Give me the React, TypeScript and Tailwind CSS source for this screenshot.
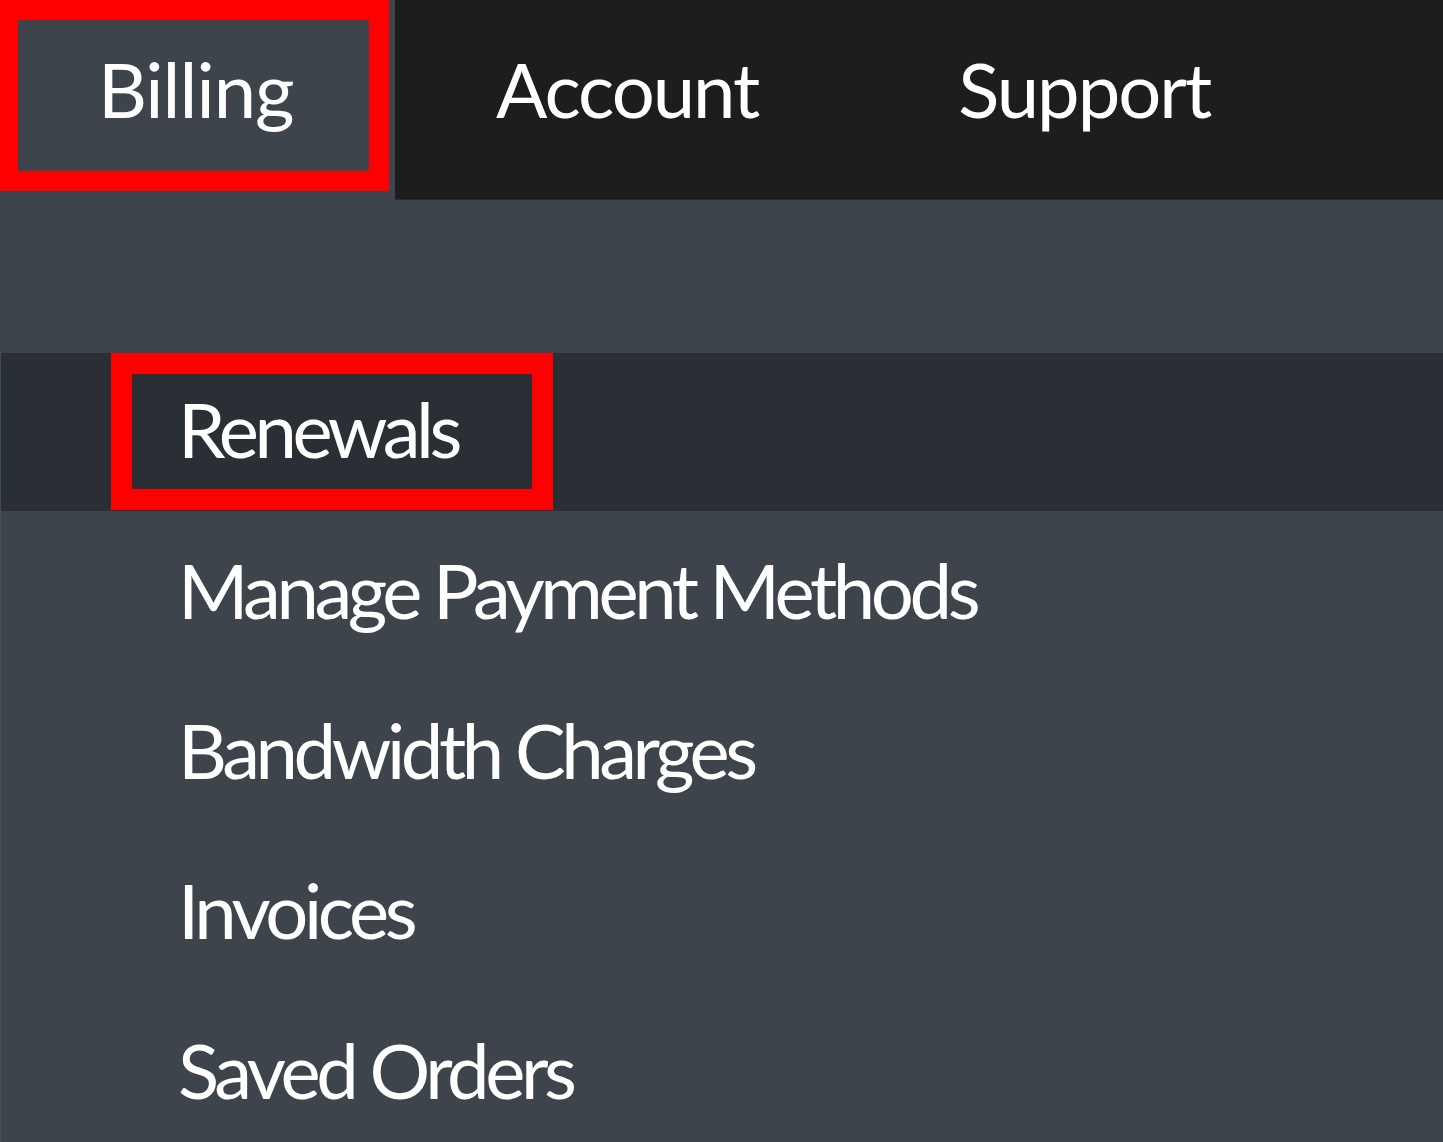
import React from "react";

const items = ["Renewals", "Manage Payment Methods", "Bandwidth Charges", "Invoices", "Saved Orders"];

export default function App() {
  return (
    <div
      className="relative w-[1443px] h-[1142px] overflow-hidden bg-[#3e444c] text-white"
      style={{ fontFamily: "Lato, 'Open Sans', sans-serif" }}
    >
      <div className="flex h-[200px]">
        <div className="w-[395px] h-[200px] bg-[#3e444c] flex items-start pl-[98px] pt-[44px] text-[76px] leading-[90px] tracking-[-1px]">
          Billing
        </div>
        <div className="flex-1 h-[200px] bg-[#1d1d1d] border-b border-[#2a2b2c] flex items-start pt-[44px] text-[76px] leading-[90px] tracking-[-2px]">
          <div className="pl-[101px] pr-[100px]">Account</div>
          <div className="px-[100px]">Support</div>
        </div>
      </div>
      <div className="h-[153px]" />
      <div className="flex flex-col border-l border-[#454b53]">
        {items.map((t, i) => (
          <div
            key={t}
            className={
              "flex items-center pl-[177px] text-[76px] pb-[6px] tracking-[-4.4px] " +
              (i === 0 ? "bg-[#2a2e35] h-[158px] mb-[2px]" : "h-[160px]")
            }
          >
            {t}
          </div>
        ))}
      </div>
      <div className="absolute left-0 top-0 w-[389px] h-[191px] border-[20px] border-l-[18px] border-[#ff0000]" />
      <div className="absolute left-[111px] top-[353px] w-[442px] h-[157px] border-[21px] border-[#ff0000]" />
    </div>
  );
}
